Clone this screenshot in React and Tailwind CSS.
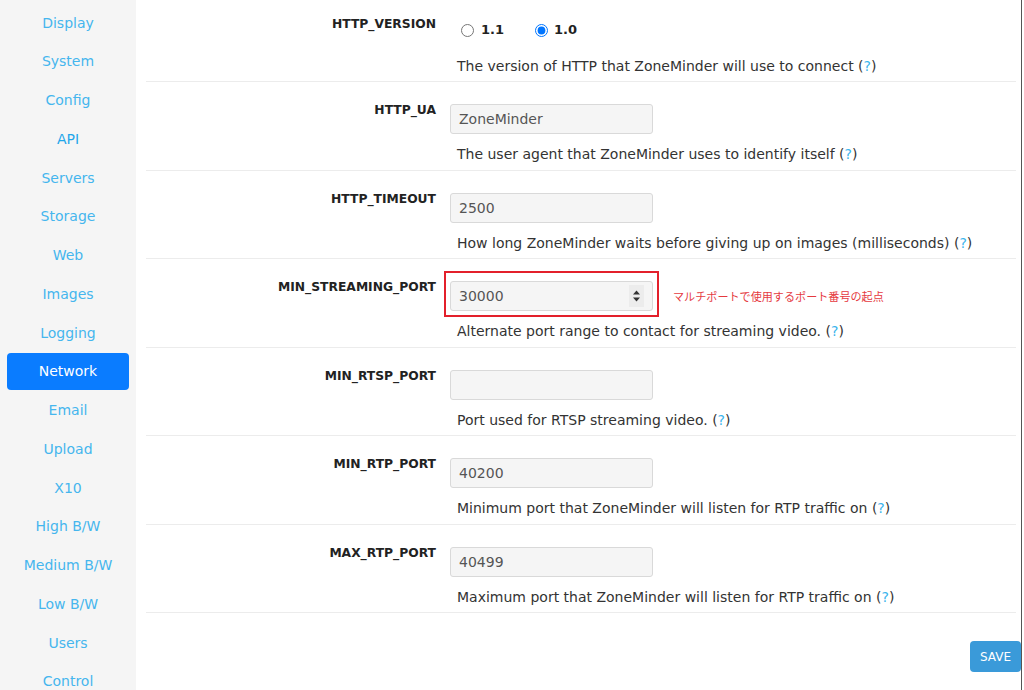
import React from "react";

const navItems = [
  "Display", "System", "Config", "API", "Servers", "Storage", "Web", "Images",
  "Logging", "Network", "Email", "Upload", "X10", "High B/W", "Medium B/W",
  "Low B/W", "Users", "Control",
];

function Help() {
  return (
    <span>
      (<span className="text-[#3bb4ec]">?</span>)
    </span>
  );
}

function Desc({ children, className = "" }) {
  return (
    <div className={`pl-[7px] text-[14px] leading-[20px] text-[#333] ${className}`}>
      {children} <Help />
    </div>
  );
}

function TextBox({ value }) {
  return (
    <div className="h-[30px] w-[203px] rounded-[3px] border border-[#d9d9d9] bg-[#f5f5f5] pl-[8px] text-[14px] leading-[28px] text-[#555]">
      {value}
    </div>
  );
}

function Row({ label, children, desc }) {
  return (
    <div className="flex border-b border-[#ececec] pt-[22px] pb-[5.5px]">
      <div className="w-[290px] text-right text-[12.3px] font-bold leading-[12px] text-[#222]">
        {label}
      </div>
      <div className="ml-[14px] flex flex-col">
        {children}
        <Desc className="mt-[10px]">{desc}</Desc>
      </div>
    </div>
  );
}

export default function App() {
  return (
    <div
      className="flex h-[690px] w-[1024px] overflow-hidden bg-white"
      style={{ fontFamily: '"DejaVu Sans", Verdana, sans-serif' }}
    >
      <div className="flex w-[136px] shrink-0 flex-col gap-[1.75px] bg-[#f5f5f5] px-[7px] pt-[4.5px]">
        {navItems.map((n) =>
          n === "Network" ? (
            <div
              key={n}
              className="flex h-[37px] shrink-0 items-center justify-center rounded-[4px] bg-[#0a7cff] text-[14px] text-white"
            >
              {n}
            </div>
          ) : (
            <div
              key={n}
              className={`flex h-[37px] shrink-0 items-center justify-center text-[14px] ${
                n === "API" ? "text-[#1fa7ea]" : "text-[#45b6ee]"
              }`}
            >
              {n}
            </div>
          )
        )}
      </div>

      <div className="flex flex-1 flex-col pl-[10px]">
        <div className="-mt-[5px] mr-[5px]">
          <div className="flex border-b border-[#ececec] pt-[23px] pb-[5px]">
            <div className="w-[290px] text-right text-[12.3px] font-bold leading-[12px] text-[#222]">
              HTTP_VERSION
            </div>
            <div className="ml-[14px] flex flex-col">
              <div className="flex h-[24px] items-center text-[13px] font-bold text-[#222]">
                <label className="flex items-center">
                  <input type="radio" name="v" className="m-0 ml-[11px] h-[13px] w-[13px]" />
                  <span className="ml-[7px]">1.1</span>
                </label>
                <label className="ml-[31px] flex items-center">
                  <input type="radio" name="v" defaultChecked className="m-0 h-[13px] w-[13px]" />
                  <span className="ml-[6px]">1.0</span>
                </label>
              </div>
              <Desc className="mt-[14px]">The version of HTTP that ZoneMinder will use to connect</Desc>
            </div>
          </div>

          <Row label="HTTP_UA" desc="The user agent that ZoneMinder uses to identify itself">
            <TextBox value="ZoneMinder" />
          </Row>
          <Row
            label="HTTP_TIMEOUT"
            desc="How long ZoneMinder waits before giving up on images (milliseconds)"
          >
            <TextBox value="2500" />
          </Row>
          <Row label="MIN_STREAMING_PORT" desc="Alternate port range to contact for streaming video.">
            <div className="relative flex items-center">
              <div className="relative h-[30px] w-[203px] rounded-[3px] border border-[#d9d9d9] bg-[#f5f5f5] pl-[8px] text-[14px] leading-[28px] text-[#555]">
                30000
                <div className="absolute right-[8px] top-[3px] flex h-[22px] w-[15px] items-center justify-center bg-[#ececec]">
                  <svg width="9" height="14" viewBox="0 0 9 14">
                    <path d="M4.5 1.5 L8 5.5 L1 5.5 Z" fill="#333" />
                    <path d="M4.5 12.5 L8 8.5 L1 8.5 Z" fill="#333" />
                  </svg>
                </div>
              </div>
              <div className="pointer-events-none absolute -left-[6px] -top-[10px] h-[46px] w-[215px] border-2 border-[#e3202b]" />
              <div
                className="ml-[20px] whitespace-nowrap text-[11.1px] text-[#e53a3f]"
                style={{ fontFamily: '"Noto Sans CJK JP", sans-serif' }}
              >
                マルチポートで使用するポート番号の起点
              </div>
            </div>
          </Row>
          <Row label="MIN_RTSP_PORT" desc="Port used for RTSP streaming video.">
            <TextBox value="" />
          </Row>
          <Row label="MIN_RTP_PORT" desc="Minimum port that ZoneMinder will listen for RTP traffic on">
            <TextBox value="40200" />
          </Row>
          <Row label="MAX_RTP_PORT" desc="Maximum port that ZoneMinder will listen for RTP traffic on">
            <TextBox value="40499" />
          </Row>
        </div>
        <div className="mt-[28px] flex justify-end">
          <div className="flex h-[31px] w-[51px] items-center justify-center rounded-[4px] bg-[#3a9ad9] text-[12px] text-white">
            SAVE
          </div>
        </div>
      </div>
      <div className="w-[3px] shrink-0 border-l border-[#555] bg-white" />
    </div>
  );
}
